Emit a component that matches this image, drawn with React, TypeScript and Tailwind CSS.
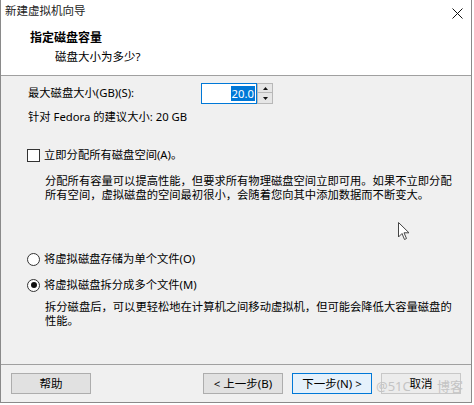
import React from "react";

const font = { fontFamily: '"Noto Sans", "Noto Sans CJK SC", sans-serif' };

function Btn({ label, primary }: { label: string; primary?: boolean }) {
  return (
    <div
      className={
        "flex h-[21px] w-[80px] items-center justify-center text-[11.5px] text-black " +
        (primary ? "border border-[#0078d7] bg-[#e5f1fb]" : "border border-[#adadad] bg-[#e1e1e1]")
      }
    >
      {label}
    </div>
  );
}

export default function App() {
  return (
    <div className="relative h-[405px] w-[474px] overflow-hidden bg-white text-black" style={font}>
      <div className="flex h-[403px] w-[472px] flex-col border-b border-l border-r border-[#8a8a8a]">
        {/* title bar */}
        <div className="flex h-[22px] items-center justify-between bg-white pl-[4px] pr-[8px] text-[11.5px] text-[#222]">
          <span>新建虚拟机向导</span>
          <svg width="11" height="11" viewBox="0 0 11 11" className="mt-[4px]">
            <path d="M0.5 0.5 L10.5 10.5 M10.5 0.5 L0.5 10.5" stroke="#111" strokeWidth="1" />
          </svg>
        </div>

        {/* header */}
        <div className="h-[54px] border-b border-[#a0a0a0] bg-white pl-[29px] pt-[9px]">
          <div className="text-[12px] font-bold leading-[14px]">指定磁盘容量</div>
          <div className="mt-[5px] pl-[25px] text-[11.5px] leading-[14px]">磁盘大小为多少?</div>
        </div>

        {/* body */}
        <div className="flex h-[288px] flex-col bg-[#f0f0f0] pl-[26px] text-[11.3px]">
          <div className="mt-[7px] flex h-[21px] items-center">
            <span className="w-[174px] pl-[1px]">最大磁盘大小(GB)(S):</span>
            <div className="flex h-[21px] w-[56px] items-center justify-end border border-[#0078d7] bg-white pr-[1px]">
              <span className="bg-[#0078d7] px-[1px] leading-[15px] text-white">20.0</span>
            </div>
            <div className="flex h-[21px] w-[16px] flex-col">
              <div className="flex h-[10px] items-center justify-center border border-[#b8b8b8] bg-[#e6e6e6]">
                <svg width="5" height="3" viewBox="0 0 5 3"><path d="M2.5 0 L5 3 L0 3 Z" fill="#111" /></svg>
              </div>
              <div className="flex h-[11px] items-center justify-center border border-t-0 border-[#b8b8b8] bg-[#e6e6e6]">
                <svg width="5" height="3" viewBox="0 0 5 3"><path d="M0 0 L5 0 L2.5 3 Z" fill="#111" /></svg>
              </div>
            </div>
          </div>

          <div className="mt-[6px] pl-[1px] leading-[14px]">针对 Fedora 的建议大小: 20 GB</div>

          <div className="mt-[24px] flex items-center gap-[4px] leading-[14px]">
            <div className="h-[13px] w-[13px] border border-[#333] bg-white" />
            <span>立即分配所有磁盘空间(A)。</span>
          </div>
          <div className="mt-[12px] whitespace-nowrap pl-[18px] leading-[14px]">
            <div>分配所有容量可以提高性能，但要求所有物理磁盘空间立即可用。如果不立即分配</div>
            <div>所有空间，虚拟磁盘的空间最初很小，会随着您向其中添加数据而不断变大。</div>
          </div>

          <div className="mt-[50px] flex items-center gap-[4px] leading-[14px]">
            <div className="h-[13px] w-[13px] rounded-full border border-[#333] bg-white" />
            <span>将虚拟磁盘存储为单个文件(O)</span>
          </div>
          <div className="mt-[12px] flex items-center gap-[4px] leading-[14px]">
            <div className="flex h-[13px] w-[13px] items-center justify-center rounded-full border border-[#333] bg-white">
              <div className="h-[6px] w-[6px] rounded-full bg-[#111]" />
            </div>
            <span>将虚拟磁盘拆分成多个文件(M)</span>
          </div>
          <div className="mt-[8px] whitespace-nowrap pl-[18px] leading-[14px]">
            <div>拆分磁盘后，可以更轻松地在计算机之间移动虚拟机，但可能会降低大容量磁盘的</div>
            <div>性能。</div>
          </div>
        </div>

        {/* footer */}
        <div className="flex flex-1 items-start border-t border-[#a0a0a0] bg-[#f0f0f0] pl-[10px] pt-[8px]">
          <Btn label="帮助" />
          <div className="ml-[112px] flex gap-[9px]">
            <Btn label="< 上一步(B)" />
            <Btn label="下一步(N) >" primary />
            <div className="flex h-[21px] w-[80px] items-center justify-center border border-[#c8c8c8] bg-[#ececec] text-[11.5px] text-black">
              取消
            </div>
          </div>
        </div>
      </div>

      {/* watermark, partly hidden behind the cancel label */}
      <div className="absolute left-[376px] top-[377px] text-[13px] text-[#c4c4c4]">@51C</div>
      <div className="absolute left-[437px] top-[377px] text-[13px] text-[#c4c4c4]">博客</div>

      {/* mouse pointer */}
      <svg className="absolute left-[398px] top-[222px]" width="12" height="19" viewBox="0 0 12 19">
        <path d="M0.5 0.5 L0.5 15 L4 11.5 L6.5 17.5 L8.5 16.5 L6 10.8 L11 10.8 Z" fill="white" stroke="#444" strokeWidth="1" />
      </svg>
    </div>
  );
}
